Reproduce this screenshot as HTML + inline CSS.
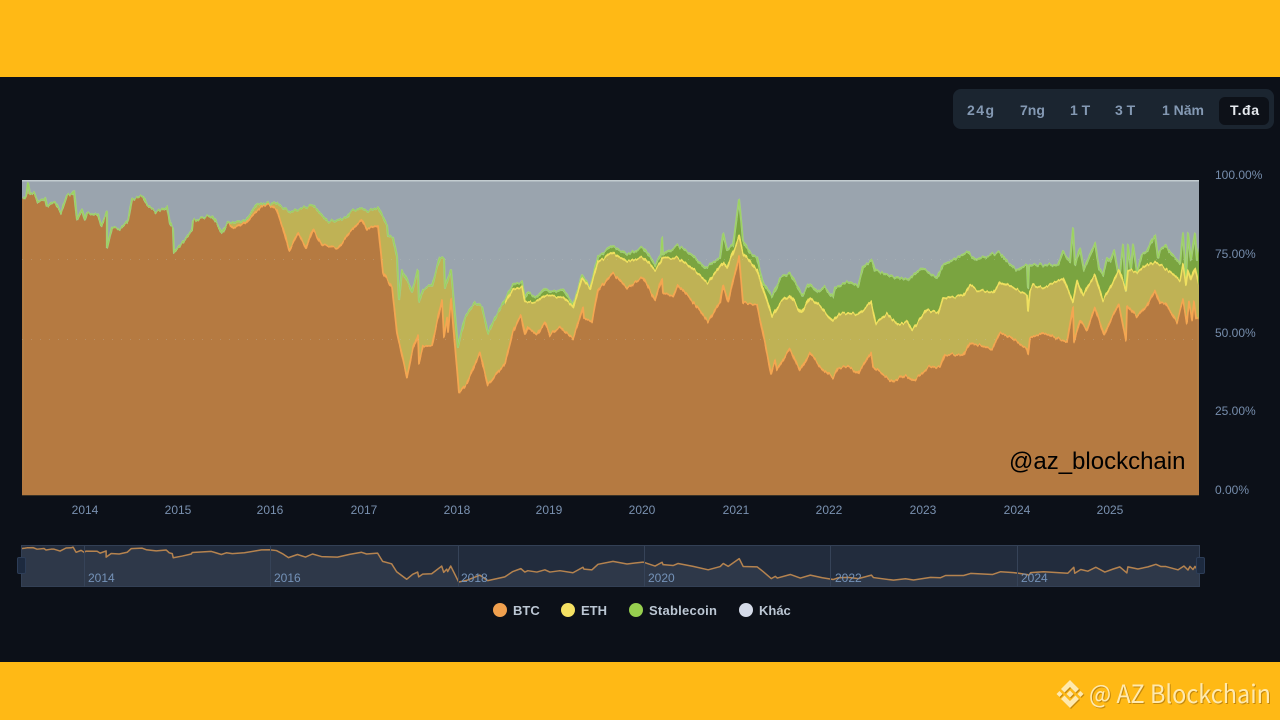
<!DOCTYPE html>
<html><head><meta charset="utf-8"><style>
html,body{margin:0;padding:0;width:1280px;height:720px;overflow:hidden;background:#0c1018}
svg{position:absolute;left:0;top:0}
text{font-family:"Liberation Sans",sans-serif}
polyline{vector-effect:non-scaling-stroke}
.b{font-size:14px;font-weight:700;fill:#8499b3}
.y{font-size:12px;fill:#768dac}
.x{font-size:12px;fill:#7a91b0;text-anchor:middle}
.m{font-size:12px;fill:#7492b8}
.l{font-size:13px;font-weight:700;fill:#bcc7d4}
</style></head><body>
<svg width="1280" height="720" viewBox="0 0 1280 720">
<defs>
<polyline id="top" points="22,495 22,199 26,196 28,183 30,194 34,193 38,202 45,198 47,207 52,202 55,202 61,213 67,195 72,194 74,190 77,220 82,209 85,220 87,213 98,214 101,225 107,212 107,248 112,227 120,230 128,220 132,199 143,196 147,205 157,212 167,207 170,223 173,228 174,252 183,242 192,230 193,221 212,215 216,222 222,233 227,223 245,221 257,204 277,203 290,212 313,205 328,222 347,217 350,212 362,208 368,212 378,207 387,225 388,235 393,238 397,257 399,300 402,270 407,280 412,292 418,270 419,302 423,290 432,285 440,257 444,258 445,288 451,270 458,347 465,317 475,302 482,307 488,333 495,318 513,285 522,282 525,298 528,292 537,298 545,288 550,292 563,289 573,305 582,275 590,287 598,257 613,245 627,255 643,247 655,265 661,255 662,238 663,255 678,245 692,255 705,268 720,258 723,233 727,250 733,245 739,200 743,240 750,253 757,258 763,283 772,297 780,278 790,273 802,295 810,283 818,293 825,287 833,297 835,288 848,282 858,287 863,267 872,260 875,270 887,275 908,280 922,268 937,278 943,265 968,252 975,260 1000,252 1007,262 1017,270 1027,265 1028,287 1029,265 1043,265 1058,265 1063,252 1070,262 1073,228 1075,265 1080,248 1084,270 1090,255 1095,243 1099,268 1103,275 1107,258 1110,262 1114,250 1118,272 1120,272 1123,245 1126,290 1128,245 1131,270 1133,245 1137,272 1142,255 1147,252 1152,240 1155,235 1158,258 1160,250 1165,245 1172,255 1180,263 1183,233 1186,277 1188,233 1191,260 1195,233 1197,260 1199,247 1199,495"/>
<polyline id="yel" points="22,495 22,199 26,196 28,183 30,194 34,193 38,202 45,198 47,207 52,202 55,202 61,213 67,195 72,194 74,190 77,220 82,209 85,220 87,213 98,214 101,225 107,212 107,248 112,227 120,230 128,220 132,199 143,196 147,205 157,212 167,207 170,223 173,228 174,252 183,242 192,230 193,221 212,215 216,222 222,233 227,223 245,221 257,204 277,203 290,212 313,205 328,222 347,217 350,212 362,208 368,212 378,207 387,225 388,235 393,238 397,257 399,300 402,270 407,280 412,292 418,270 419,302 423,290 432,285 440,257 444,258 445,288 451,270 458,347 465,317 475,302 482,307 488,333 495,318 513,290 522,287 525,302 537,302 545,295 563,297 573,307 582,278 590,288 598,262 613,252 627,262 643,257 655,270 661,262 662,258 678,258 692,268 708,283 723,262 727,268 739,237 743,253 757,270 772,317 780,303 790,295 801,313 810,297 823,310 833,321 840,313 858,315 871,302 876,323 887,314 898,325 907,322 912,330 927,310 938,313 943,298 963,296 970,285 977,290 993,293 1000,282 1013,288 1027,295 1028,310 1030,290 1033,285 1043,288 1063,278 1073,302 1077,280 1083,295 1088,285 1095,275 1103,300 1112,285 1119,270 1126,290 1128,270 1137,272 1147,265 1155,262 1165,268 1180,280 1183,265 1186,285 1188,270 1191,280 1195,268 1199,285 1199,495"/>
<polyline id="btc" points="22,495 22,199 26,196 28,194 30,194 34,193 38,202 45,198 47,207 52,202 55,202 61,213 67,195 72,194 74,190 77,220 82,209 85,220 87,213 98,214 101,225 107,212 107,248 112,227 120,230 128,220 132,199 143,196 147,205 157,212 167,207 170,223 173,228 174,252 183,242 192,230 193,221 212,215 216,222 222,233 227,223 233,228 245,223 257,211 262,206 270,205 277,210 283,228 289,251 298,233 306,248 313,230 322,245 338,248 350,232 362,220 367,230 378,225 383,273 392,287 397,333 407,377 413,348 418,335 419,363 423,347 432,345 442,300 444,337 447,318 448,332 451,300 459,393 467,383 480,353 488,385 505,363 513,332 521,315 525,335 528,327 537,335 545,322 550,335 560,327 573,339 578,323 583,307 584,318 592,322 598,290 613,273 627,288 643,277 655,300 662,278 663,292 673,297 678,285 693,302 708,322 720,303 723,285 728,302 739,257 743,303 757,305 763,333 771,373 775,360 777,370 790,349 800,370 810,353 822,368 833,378 838,368 848,366 858,373 871,353 873,367 893,382 905,374 913,381 930,366 940,368 945,355 963,355 970,343 992,349 1000,333 1013,338 1027,350 1028,355 1030,338 1043,333 1067,342 1073,307 1074,342 1080,320 1087,330 1095,307 1104,335 1112,318 1119,305 1126,340 1127,305 1137,317 1147,305 1155,290 1160,303 1165,303 1177,322 1183,300 1187,323 1189,302 1192,320 1194,302 1196,318 1199,320 1199,495"/>
<clipPath id="cAll"><rect x="22" y="180" width="1177" height="315"/></clipPath>
<clipPath id="cTop"><rect x="23" y="181" width="1175" height="310"/></clipPath>
<clipPath id="cYel"><rect x="505" y="181" width="693" height="310"/></clipPath>
<clipPath id="cBtc"><rect x="229" y="181" width="969" height="310"/></clipPath>
<clipPath id="cMini"><rect x="21" y="545" width="1179" height="42"/></clipPath>
<filter id="jit" filterUnits="userSpaceOnUse" x="0" y="170" width="1230" height="340" color-interpolation-filters="sRGB">
<feTurbulence type="fractalNoise" baseFrequency="0.33 0.015" numOctaves="2" seed="4" result="n"/>
<feColorMatrix in="n" type="matrix" values="1 0 0 0 0  0 0 0 0 .5  0 0 0 0 .5  0 0 0 0 1" result="m"/>
<feDisplacementMap in="SourceGraphic" in2="m" scale="6" xChannelSelector="G" yChannelSelector="R"/>
</filter>
</defs>

<!-- bands -->
<rect x="0" y="0" width="1280" height="77" fill="#ffb915"/>
<rect x="0" y="662" width="1280" height="58" fill="#ffb915"/>

<!-- range selector -->
<rect x="953" y="89" width="321" height="40" rx="8" fill="#1b2530"/>
<rect x="1219" y="97" width="50" height="28" rx="6" fill="#0d1118"/>
<text class="b" x="967" y="115" textLength="27">24g</text>
<text class="b" x="1020" y="115">7ng</text>
<text class="b" x="1070" y="115">1 T</text>
<text class="b" x="1115" y="115">3 T</text>
<text class="b" x="1162" y="115" textLength="42">1 Năm</text>
<text class="b" x="1230" y="115" textLength="29" style="fill:#e6eaef">T.đa</text>

<!-- main chart -->
<rect x="22" y="180" width="1177" height="315" fill="#9aa4ae"/>
<rect x="22" y="180" width="1177" height="1.500" fill="#c3ccd0"/>
<g clip-path="url(#cAll)">
<g filter="url(#jit)">
<use href="#top" fill="#7aa440"/>
<use href="#yel" fill="#bfb255"/>
<use href="#btc" fill="#b57a41"/>
<g clip-path="url(#cTop)"><use href="#top" stroke="#a5c98a" stroke-width="2.200" fill="none" stroke-linejoin="round"/><use href="#top" stroke="#9cd45c" stroke-width="1" fill="none" stroke-linejoin="round"/></g>
<g clip-path="url(#cYel)"><use href="#yel" stroke="#efe05f" stroke-width="1.800" fill="none" stroke-linejoin="round"/></g>
<g clip-path="url(#cBtc)"><use href="#btc" stroke="#f4a651" stroke-width="1.800" fill="none" stroke-linejoin="round"/></g>
</g>
</g>
<rect x="22" y="480" width="1177" height="15" fill="#b57a41"/>
<g stroke-dasharray="1 8" stroke="#c8ccc8" stroke-opacity=".25" stroke-width="1">
<line x1="22" y1="259.500" x2="1199" y2="259.500"/>
<line x1="22" y1="339.500" x2="1199" y2="339.500"/>
</g>
<rect x="22" y="495" width="1177" height="1" fill="#3a3226"/>

<text x="1009" y="469" font-size="24" fill="#000">@az_blockchain</text>

<!-- y axis -->
<text class="y" x="1215" y="179">100.00%</text>
<text class="y" x="1215" y="258">75.00%</text>
<text class="y" x="1215" y="337">50.00%</text>
<text class="y" x="1215" y="415">25.00%</text>
<text class="y" x="1215" y="494">0.00%</text>

<!-- x axis -->
<text class="x" x="85" y="514">2014</text>
<text class="x" x="178" y="514">2015</text>
<text class="x" x="270" y="514">2016</text>
<text class="x" x="364" y="514">2017</text>
<text class="x" x="457" y="514">2018</text>
<text class="x" x="549" y="514">2019</text>
<text class="x" x="642" y="514">2020</text>
<text class="x" x="736" y="514">2021</text>
<text class="x" x="829" y="514">2022</text>
<text class="x" x="923" y="514">2023</text>
<text class="x" x="1017" y="514">2024</text>
<text class="x" x="1110" y="514">2025</text>

<!-- mini chart -->
<rect x="21" y="545" width="1179" height="42" fill="#222c3d"/>
<g clip-path="url(#cMini)">
<g transform="translate(-1.04,514.440) scale(1.0017,0.172)">
<use href="#btc" fill="#2e3849" stroke="#b5834f" stroke-width="1.500" stroke-linejoin="round"/>
</g>
</g>
<rect x="21.500" y="545.500" width="1178" height="41" fill="none" stroke="#334055"/>
<g fill="#364358">
<rect x="84" y="546" width="1" height="41"/><rect x="270" y="546" width="1" height="41"/><rect x="458" y="546" width="1" height="41"/><rect x="644" y="546" width="1" height="41"/><rect x="830" y="546" width="1" height="41"/><rect x="1017" y="546" width="1" height="41"/>
</g>
<text class="m" x="88" y="582">2014</text>
<text class="m" x="274" y="582">2016</text>
<text class="m" x="461" y="582">2018</text>
<text class="m" x="648" y="582">2020</text>
<text class="m" x="835" y="582">2022</text>
<text class="m" x="1021" y="582">2024</text>
<rect x="17.500" y="557.500" width="8" height="16" rx="1.500" fill="#1d2a3f" stroke="#2d3d57"/>
<rect x="1196.500" y="557.500" width="8" height="16" rx="1.500" fill="#1d2a3f" stroke="#2d3d57"/>

<!-- legend -->
<circle cx="500" cy="610" r="7" fill="#f0a04e"/><text class="l" x="513" y="615">BTC</text>
<circle cx="568" cy="610" r="7" fill="#f5e163"/><text class="l" x="581" y="615">ETH</text>
<circle cx="636" cy="610" r="7" fill="#97cf4f"/><text class="l" x="649" y="615" textLength="68">Stablecoin</text>
<circle cx="746" cy="610" r="7" fill="#d5dbe8"/><text class="l" x="759" y="615">Khác</text>

<!-- watermark -->
<g style="filter:drop-shadow(1px 1px 0 rgba(170,115,10,.7))">
<g fill="#ffe9ae" transform="translate(1070,694)">
<path d="M0,-14 L9,-5 L5.500,-1.500 L0,-7 L-5.500,-1.500 L-9,-5 Z"/>
<path d="M0,14 L9,5 L5.500,1.500 L0,7 L-5.500,1.500 L-9,5 Z"/>
<path d="M0,-3.500 L3.500,0 L0,3.500 L-3.500,0 Z"/>
<path d="M-10.500,-3 L-7.500,0 L-10.500,3 L-13.500,0 Z"/>
<path d="M10.500,-3 L13.500,0 L10.500,3 L7.500,0 Z"/>
</g>
<text x="1089" y="703" font-size="25" fill="#ffe9ae" textLength="182" lengthAdjust="spacingAndGlyphs" style="font-family:'Noto Sans CJK SC','DejaVu Sans',sans-serif">@ AZ Blockchain</text>
</g>
</svg>
</body></html>
